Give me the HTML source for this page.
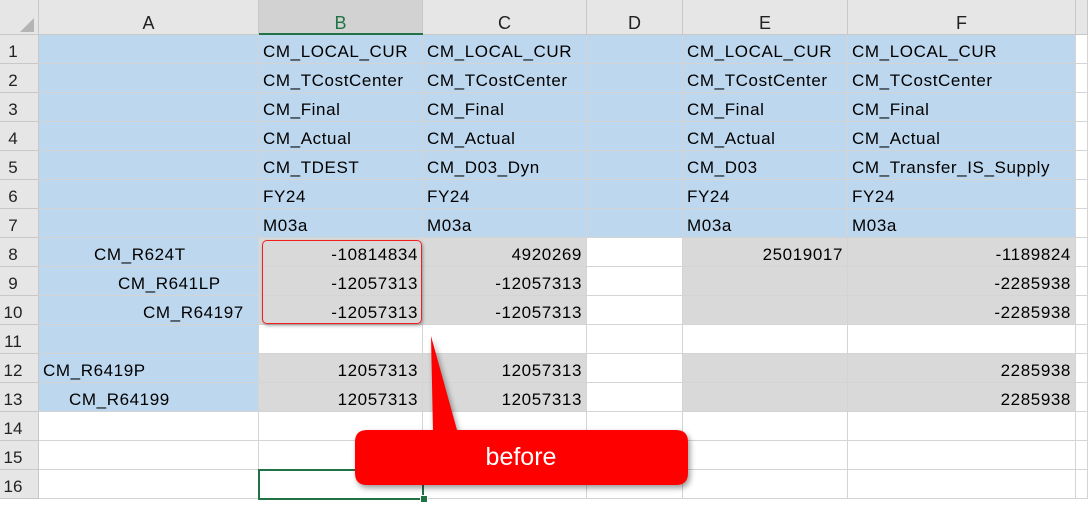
<!DOCTYPE html><html><head><style>
body{margin:0;width:1088px;height:509px;overflow:hidden;background:#fff;font-family:"Liberation Sans",sans-serif;position:relative}
.c{position:absolute;box-sizing:border-box;border-right:1px solid #d4d4d4;border-bottom:1px solid #d4d4d4;font-size:17px;line-height:34px;white-space:nowrap;overflow:hidden;color:#000;letter-spacing:0.6px}
.h{background:#e6e6e6;text-align:center;color:#222;border-color:#c8c8c8;letter-spacing:0}
.hd{font-size:18px;line-height:46px}
.r{text-align:right;padding-right:4px}
.l{padding-left:4px}
.b{background:#bdd7ee}.g{background:#d9d9d9}
</style></head><body>
<div id="g"></div>
<script>
var X=[0,39,259,423,587,683,848,1076,1088];
var cols=['','A','B','C','D','E','F',''];
var h='';
function cell(x0,x1,y,hgt,cls,t){h+='<div class="c '+cls+'" style="left:'+x0+'px;top:'+y+'px;width:'+(x1-x0)+'px;height:'+hgt+'px">'+t+'</div>';}
for(var i=0;i<8;i++){cell(X[i],X[i+1],0,35,'h hd',cols[i]);}
var hdr=['','CM_LOCAL_CUR','CM_TCostCenter','CM_Final','CM_Actual','','FY24','M03a'];
var r5=['CM_TDEST','CM_D03_Dyn','','CM_D03','CM_Transfer_IS_Supply'];
var data={8:['CM_R624T','-10814834','4920269','','25019017','-1189824'],9:['CM_R641LP','-12057313','-12057313','','','-2285938'],10:['CM_R64197','-12057313','-12057313','','','-2285938'],12:['CM_R6419P','12057313','12057313','','','2285938'],13:['CM_R64199','12057313','12057313','','','2285938']};
var apad={8:'padding-left:55px',9:'padding-left:79px',10:'padding-left:104px',12:'padding-left:4px',13:'padding-left:30px'};
for(var r=1;r<=16;r++){
 var y=35+(r-1)*29;
 cell(0,39,y,29,'h','<span style="position:relative;left:-6px">'+r+'</span>');
 for(var c=1;c<=7;c++){
  var x0=X[c],x1=X[c+1],cls='',t='';
  if(r<=7){ if(c<=6){cls='b l'; if(c>=2&&c!=4) t=(r==5)?r5[c-2]:hdr[r];} }
  else if(r<=13){
   if(c==1)cls='b';
   else if(c<=6&&r!=11&&c!=4)cls='g r';
   if(data[r]&&c<=6){t=data[r][c-1]; if(c==1){h+='<div class="c b" style="left:'+x0+'px;top:'+y+'px;width:'+(x1-x0)+'px;height:29px;'+apad[r]+'">'+t+'</div>';continue;}}
  }
  cell(x0,x1,y,29,cls,t);
 }
}
document.getElementById('g').innerHTML=h;
</script>
<div style="position:absolute;left:259px;top:0;width:164px;height:35px;background:#d2d2d2;text-align:center;line-height:46px;font-size:18px;color:#217346;border-right:1px solid #c8c8c8;box-sizing:border-box">B</div>
<div style="position:absolute;left:259px;top:33px;width:164px;height:2px;background:#217346"></div>
<svg style="position:absolute;left:0;top:0" width="39" height="35"><polygon points="34,18 34,32 20,32" fill="#b4b4b4"/></svg>
<div style="position:absolute;left:262px;top:240px;width:160px;height:84px;border:1.5px solid #f02020;border-radius:5px;box-sizing:border-box;box-shadow:1px 2px 3px rgba(0,0,0,.3)"></div>
<div style="position:absolute;left:258px;top:469px;width:166px;height:31px;border:2px solid #217346;box-sizing:border-box"></div>
<div style="position:absolute;left:420px;top:495px;width:6px;height:6px;background:#217346;border:1px solid #fff"></div>
<svg style="position:absolute;left:0;top:0;filter:drop-shadow(2px 3px 3px rgba(0,0,0,.4))" width="1088" height="509">
<path d="M367 430 H433 L431 336 L457 430 H676 Q688 430 688 442 V473 Q688 485 676 485 H367 Q355 485 355 473 V442 Q355 430 367 430Z" fill="#ff0000"/>
<text x="521" y="465" fill="#fff" font-size="25" text-anchor="middle" font-family="Liberation Sans,sans-serif">before</text>
</svg>
</body></html>
